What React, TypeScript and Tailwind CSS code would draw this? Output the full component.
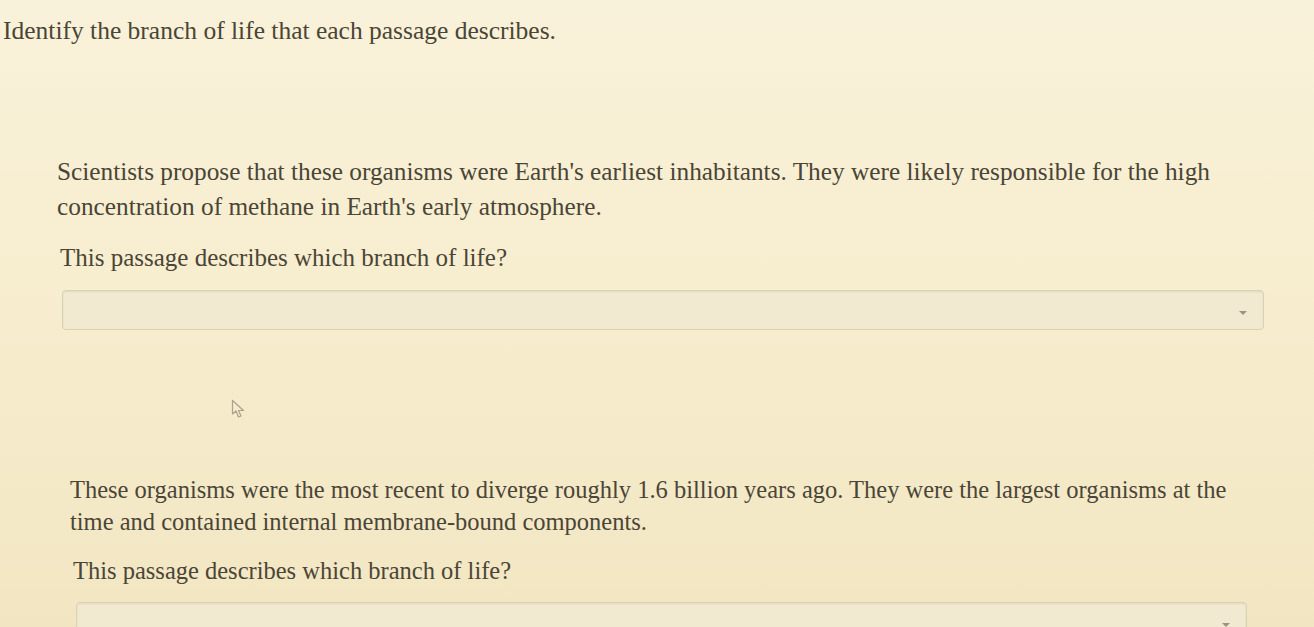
import React from "react";

function SelectBox({ className }: { className: string }) {
  return (
    <div
      className={`relative h-[40px] rounded-[4px] border border-[#d9d1b4] bg-[#f1ead0] shadow-[inset_0_1px_2px_rgba(120,110,80,0.12)] ${className}`}
    >
      <div className="absolute right-[16px] top-[20px] h-0 w-0 border-l-[4px] border-r-[4px] border-t-[4px] border-l-transparent border-r-transparent border-t-[#9a9482]" />
    </div>
  );
}

export default function App() {
  return (
    <div
      className="relative h-[627px] w-[1314px] overflow-hidden bg-gradient-to-b from-[#f9f2da] via-[#f7edce] to-[#f2e6c2] text-[#4a4536]"
      style={{ fontFamily: '"Liberation Serif", "Times New Roman", serif' }}
    >
      <h1 className="ml-[3px] mt-[16px] text-[25.5px] leading-[30px] font-normal">
        Identify the branch of life that each passage describes.
      </h1>

      <div className="ml-[57px] w-[1207px]">
        <p className="mt-[108px] text-[25.3px] leading-[35px]">
          Scientists propose that these organisms were Earth's earliest inhabitants. They were likely responsible for the high concentration of methane in Earth's early atmosphere.
        </p>
        <p className="ml-[3px] mt-[16px] text-[25px] leading-[35px]">
          This passage describes which branch of life?
        </p>
        <SelectBox className="ml-[5px] mt-[15px] w-[1202px]" />
      </div>

      <div className="ml-[70px] w-[1177px]">
        <p className="mt-[144px] text-[24.5px] leading-[32px]">
          These organisms were the most recent to diverge roughly 1.6 billion years ago. They were the largest organisms at the time and contained internal membrane-bound components.
        </p>
        <p className="ml-[3px] mt-[17px] text-[24.5px] leading-[32px]">
          This passage describes which branch of life?
        </p>
        <SelectBox className="ml-[6px] mt-[15px] w-[1171px]" />
      </div>

      <svg
        className="absolute left-[231px] top-[399px]"
        width="18"
        height="22"
        viewBox="0 0 18 22"
        fill="none"
      >
        <path
          d="M1.5 1.5 L1.5 15 L5 12 L7.5 18 L10 17 L7.5 11.5 L12.5 11.5 Z"
          stroke="#a8a290"
          strokeWidth="1.2"
          strokeLinejoin="round"
        />
      </svg>
    </div>
  );
}
